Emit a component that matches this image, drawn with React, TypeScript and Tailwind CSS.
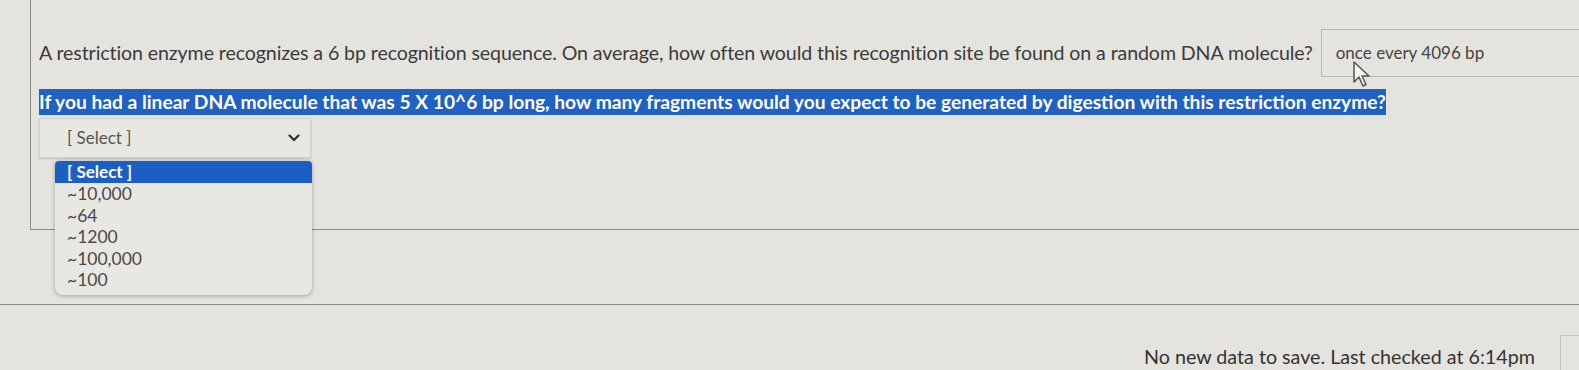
import React from 'react';

const options = ['~10,000', '~64', '~1200', '~100,000', '~100'];

function Chevron() {
  return (
    <svg width="12" height="8" viewBox="0 0 12 8" fill="none">
      <path d="M1.5 1.5 6 6l4.5-4.5" stroke="#333" strokeWidth="2.2" strokeLinecap="round" strokeLinejoin="round" />
    </svg>
  );
}

function Cursor() {
  return (
    <svg width="22" height="30" viewBox="0 0 22 30" fill="none">
      <path d="M2 2v20l5-5 4 9 3-1.5-4-8.5h7L2 2Z" fill="#f4f3f0" stroke="#555" strokeWidth="1.5" strokeLinejoin="round" />
    </svg>
  );
}

export default function App() {
  return (
    <div className="relative h-[370px] w-full overflow-hidden bg-[#e5e3de] font-['Lato','Liberation_Sans',sans-serif] text-[#3b3b3b]">
      <div className="ml-[30px] h-[230px] border-b border-l border-[#8d8c88] pl-[8px] pt-[29px]">
        <div className="flex items-center">
          <p className="shrink-0 text-[19.6px] tracking-[-0.1px]">
            A restriction enzyme recognizes a 6 bp recognition sequence. On average, how often would this recognition site be found on a random DNA molecule?
          </p>
          <div className="relative ml-[8px] flex h-[48px] w-[320px] shrink-0 items-center border border-[#b9b7b2] pl-[14px] text-[17px] text-[#444]">
            once every 4096 bp
            <div className="absolute left-[30px] top-[30px]">
              <Cursor />
            </div>
          </div>
        </div>
        <div className="mt-[12px]">
          <span className="inline-block bg-[#2161c3] text-[19.2px] font-bold leading-[26px] text-white">
            If you had a linear DNA molecule that was 5 X 10^6 bp long, how many fragments would you expect to be generated by digestion with this restriction enzyme?
          </span>
        </div>
        <div className="mt-[3px] flex h-[40px] w-[272px] items-center justify-between border border-[#d2d0cb] bg-[#e9e7e2] pl-[27px] pr-[10px] text-[17px] text-[#555] shadow-[0_1px_2px_rgba(0,0,0,0.15)]">
          <span>[ Select ]</span>
          <Chevron />
        </div>
      </div>

      <div className="absolute left-[55px] top-[161px] w-[257px] overflow-hidden rounded-b-[8px] rounded-t-[4px] bg-[#e9e7e2] pb-[4px] shadow-[0_1px_4px_rgba(0,0,0,0.3)]">
        <div className="h-[22px] bg-[#1c5fc4] pl-[12px] text-[17px] font-bold leading-[22px] text-white">[ Select ]</div>
        {options.map((o) => (
          <div key={o} className="pl-[12px] text-[17.5px] leading-[21.5px] text-[#4a4a4a]">
            {o}
          </div>
        ))}
      </div>

      <div className="mt-[74px] border-t border-[#8d8c88]" />

      <div className="mt-[30px] flex items-start pl-[1144px]">
        <span className="mt-[7px] shrink-0 whitespace-nowrap text-[19.7px] text-[#333]">No new data to save. Last checked at 6:14pm</span>
        <div className="ml-auto h-[40px] w-[19px] shrink-0 border-l border-t border-[#c4c2bd]" />
      </div>
    </div>
  );
}
